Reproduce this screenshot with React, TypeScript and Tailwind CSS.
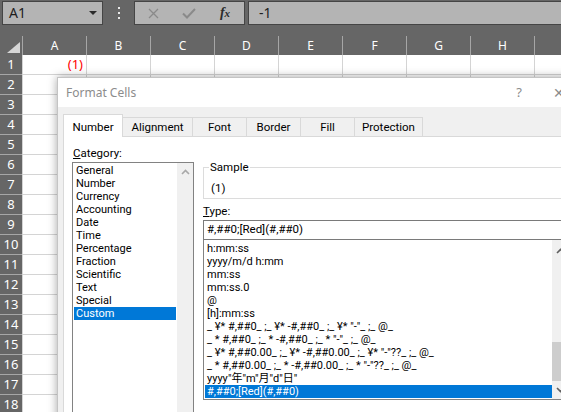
import React from 'react';

const cols = ['A', 'B', 'C', 'D', 'E', 'F', 'G', 'H', ''];
const rows = Array.from({ length: 18 }, (_, i) => i + 1);

const categories = [
  'General', 'Number', 'Currency', 'Accounting', 'Date', 'Time', 'Percentage',
  'Fraction', 'Scientific', 'Text', 'Special', 'Custom',
];

const types = [
  'h:mm:ss',
  'yyyy/m/d h:mm',
  'mm:ss',
  'mm:ss.0',
  '@',
  '[h]:mm:ss',
  '_ ¥* #,##0_ ;_ ¥* -#,##0_ ;_ ¥* "-"_ ;_ @_',
  '_ * #,##0_ ;_ * -#,##0_ ;_ * "-"_ ;_ @_',
  '_ ¥* #,##0.00_ ;_ ¥* -#,##0.00_ ;_ ¥* "-"??_ ;_ @_',
  '_ * #,##0.00_ ;_ * -#,##0.00_ ;_ * "-"??_ ;_ @_',
  'yyyy"年"m"月"d"日"',
  '#,##0;[Red](#,##0)',
];

const tabs = [
  { label: 'Number', w: 'w-[60px]' },
  { label: 'Alignment', w: 'w-[70px]' },
  { label: 'Font', w: 'w-[54px]' },
  { label: 'Border', w: 'w-[54px]' },
  { label: 'Fill', w: 'w-[54px]' },
  { label: 'Protection', w: 'w-[68px]' },
];

function Chevron({ down = false, color = '#606060' }: { down?: boolean; color?: string }) {
  return (
    <svg width="9" height="6" viewBox="0 0 9 6" className="block">
      <path
        d={down ? 'M1 1l3.5 3.5L8 1' : 'M1 5l3.5-3.5L8 5'}
        fill="none"
        stroke={color}
        strokeWidth="1.6"
      />
    </svg>
  );
}

export default function App() {
  return (
    <div className="relative w-[561px] h-[412px] overflow-hidden bg-white font-['Noto_Sans','Noto_Sans_CJK_SC',sans-serif]">
      {/* Formula bar */}
      <div className="h-[36px] bg-[#666666] flex items-start">
        <div className="mt-[1px] ml-[2px] w-[101px] h-[24px] shrink-0 bg-[#b4b4b4] border border-[#454545] flex items-center justify-between pl-[6px] pr-[5px]">
          <span className="text-[14px] text-[#1e1e1e] leading-none">A1</span>
          <svg width="8" height="4" viewBox="0 0 8 4" className="block">
            <path d="M0 0h8L4 4z" fill="#2b2b2b" />
          </svg>
        </div>
        <div className="w-[31px] shrink-0 flex flex-col items-center gap-[3px] pt-[7px]">
          <div className="w-[2px] h-[2px] bg-[#e8e8e8]" />
          <div className="w-[2px] h-[2px] bg-[#e8e8e8]" />
          <div className="w-[2px] h-[2px] bg-[#e8e8e8]" />
        </div>
        <div className="mt-[1px] w-[111px] h-[24px] shrink-0 bg-[#b4b4b4] border border-[#454545] flex items-center">
          <div className="w-[36px] flex justify-center">
            <svg width="11" height="11" viewBox="0 0 11 11" className="block">
              <path d="M1 1l9 9M10 1l-9 9" stroke="#8a8a8a" strokeWidth="1.3" />
            </svg>
          </div>
          <div className="w-[36px] flex justify-center">
            <svg width="14" height="11" viewBox="0 0 14 11" className="block">
              <path d="M1 5.5l4 4L13 1" fill="none" stroke="#8a8a8a" strokeWidth="2" />
            </svg>
          </div>
          <div className="w-[36px] flex justify-center">
            <span className="font-['Liberation_Serif',serif] italic font-bold text-[14px] text-[#2b2b2b] leading-none">
              f<span className="text-[11px]">x</span>
            </span>
          </div>
        </div>
        <div className="mt-[1px] ml-[3px] w-[330px] h-[24px] shrink-0 bg-[#b4b4b4] border border-[#454545] flex items-center pl-[10px]">
          <span className="text-[14px] text-[#1e1e1e] leading-none">-1</span>
        </div>
      </div>

      {/* Column header */}
      <div className="h-[19px] bg-[#666666] flex">
        <div className="w-[22px] shrink-0 flex items-end justify-end pr-[2px] pb-[2px]">
          <svg width="13" height="11" viewBox="0 0 13 11" className="block">
            <path d="M13 0V11H0z" fill="#d6d6d6" />
          </svg>
        </div>
        {cols.map((c, i) => (
          <div
            key={i}
            className="w-[64px] shrink-0 border-l border-[#a6a6a6] flex items-center justify-center text-[12px] text-white leading-none"
          >
            {c}
          </div>
        ))}
      </div>

      {/* Rows */}
      {rows.map((r) => (
        <div key={r} className="h-[20px] flex">
          <div className="w-[22px] shrink-0 bg-[#666666] border-b border-[#a6a6a6] flex items-center justify-center text-[13px] text-white leading-none">
            {r}
          </div>
          {cols.map((c, i) => (
            <div
              key={i}
              className="w-[64px] shrink-0 border-l border-b border-[#d4d4d4] flex items-center justify-end pr-[3px]"
            >
              {r === 1 && c === 'A' ? (
                <span className="text-[13px] text-[#ff0000] leading-none">(1)</span>
              ) : null}
            </div>
          ))}
        </div>
      ))}

      {/* Format Cells dialog */}
      <div className="absolute left-[57px] top-[77px] w-[560px] h-[360px] bg-[#f0f0f0] border border-[#c4c4c4] shadow-[0_0_9px_rgba(0,0,0,0.35)] flex flex-col">
        <div className="h-[29px] shrink-0 bg-white flex items-center pl-[8px] pr-[37px]">
          <span className="text-[12px] text-[#8c8c8c] leading-none">Format Cells</span>
          <span className="ml-auto w-[40px] text-center text-[13px] text-[#8c8c8c] leading-none">?</span>
          <span className="w-[40px] text-center text-[14px] text-[#8c8c8c] leading-none">✕</span>
        </div>

        <div className="flex-1 flex flex-col pt-[7px] pl-[5px] font-['Roboto','Noto_Sans_CJK_SC',sans-serif]">
          {/* Tabs */}
          <div className="h-[22px] flex items-end shrink-0">
            {tabs.map((t, i) =>
              i === 0 ? (
                <div
                  key={t.label}
                  className={`${t.w} h-[23px] -mb-px relative z-10 bg-white border-t border-l border-r border-[#d9d9d9] flex items-center justify-center pt-[4px] text-[11.5px] text-black leading-none`}
                >
                  {t.label}
                </div>
              ) : (
                <div
                  key={t.label}
                  className={`${t.w} h-[19px] bg-[#f0f0f0] border-t border-r border-[#d9d9d9] flex items-center justify-center pt-[2px] text-[11.5px] text-black leading-none`}
                >
                  {t.label}
                </div>
              )
            )}
          </div>

          {/* Panel */}
          <div className="flex-1 bg-white border border-[#d9d9d9] flex pl-[8px] pt-[8px]">
            {/* Category */}
            <div className="w-[122px] shrink-0 flex flex-col">
              <div className="h-[17px] pt-[1px] text-[11.5px] text-black leading-[14px] pl-[1px]">
                <span className="underline">C</span>ategory:
              </div>
              <div className="h-[260px] border border-[#828282] flex">
                <div className="flex-1 px-[1px] pt-[1px]">
                  {categories.map((c) => (
                    <div
                      key={c}
                      className={`h-[13px] pl-[2px] text-[11px] leading-[13px] ${
                        c === 'Custom' ? 'bg-[#0078d7] text-white' : 'text-black'
                      }`}
                    >
                      {c}
                    </div>
                  ))}
                </div>
                <div className="w-[16px] shrink-0 bg-[#f0f0f0] flex justify-center pt-[6px]">
                  <Chevron color="#a8a8a8" />
                </div>
              </div>
            </div>

            {/* Right side */}
            <div className="w-[367px] shrink-0 ml-[9px] flex flex-col">
              <div className="mt-[22px] h-[32px] border border-[#dcdcdc]">
                <span className="block -mt-[8px] ml-[5px] w-fit bg-white px-[1px] text-[11.5px] text-black leading-[14px]">
                  Sample
                </span>
                <div className="mt-[7px] pl-[7px] text-[11.5px] text-black leading-[14px]">(1)</div>
              </div>
              <div className="mt-[5px] h-[14px] text-[11.5px] text-black leading-[14px]">
                <span className="underline">T</span>ype:
              </div>
              <div className="mt-[2px] h-[20px] border border-[#7a7a7a] flex items-center pl-[3px] text-[11.5px] text-black leading-none">
                #,##0;[Red](#,##0)
              </div>
              <div className="h-[160px] border border-t-0 border-[#828282] flex">
                <div className="flex-1 pl-[1px] pt-[2px]">
                  {types.map((t, i) => (
                    <div
                      key={i}
                      className={`h-[13px] pl-[2px] whitespace-pre text-[11px] leading-[13px] ${
                        i === types.length - 1 ? 'bg-[#0078d7] text-white' : 'text-black'
                      }`}
                    >
                      {t}
                    </div>
                  ))}
                </div>
                <div className="w-[17px] shrink-0 bg-[#f0f0f0] flex flex-col items-center pt-[8px] pb-[6px]">
                  <Chevron />
                  <div className="mt-[88px] w-full h-[39px] bg-[#cdcdcd]" />
                  <div className="mt-auto">
                    <Chevron down />
                  </div>
                </div>
              </div>
            </div>
          </div>
        </div>
      </div>
    </div>
  );
}
